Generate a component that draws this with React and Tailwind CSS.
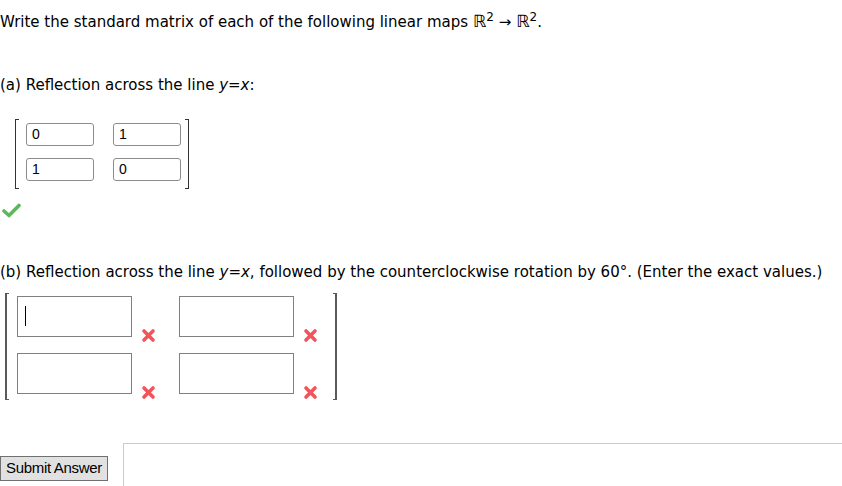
import React from "react";

function Bracket({ side, color, thick, tick }) {
  const base = side === "left" ? "border-l border-t border-b" : "border-r border-t border-b";
  return <div className={base} style={{ borderColor: color, borderLeftWidth: side === "left" ? thick : 0, borderRightWidth: side === "right" ? thick : 0, width: tick }} />;
}

function XMark() {
  return <svg width="15" height="15" viewBox="0 0 15 15" className="shrink-0">
    <path d="M3 3 L12 12 M12 3 L3 12" stroke="#f2545b" strokeWidth="3.6" strokeLinecap="round" />
  </svg>;
}

function Check() {
  return <svg width="19" height="15" viewBox="0 0 19 15">
    <path d="M2 8 L7 12.5 L17 2.5" fill="none" stroke="#5cb85c" strokeWidth="3.6" strokeLinecap="round" strokeLinejoin="round" />
  </svg>;
}

function SmallBox({ value }) {
  return <div className="flex h-[23px] w-[68px] items-center rounded-[3px] border border-[#8c8c8c] pl-[5px] font-['Liberation_Sans',Arial,sans-serif] text-[14px] text-black">{value}</div>;
}

function BigCell({ caret }) {
  return <div className="flex items-end">
    <div className="relative h-[41px] w-[115px] border border-[#808080] bg-white">
      {caret && <span className="absolute left-[7px] top-[9px] h-[20px] w-px bg-black" />}
    </div>
    <div className="ml-[9px] mb-[-6px]"><XMark /></div>
  </div>;
}

export default function App() {
  return <div className="min-h-screen bg-white font-['DejaVu_Sans',Verdana,sans-serif] text-[15px] text-black">
    <p className="pt-[11px] leading-[20px]">Write the standard matrix of each of the following linear maps <span className="text-[17px]">ℝ</span><sup className="text-[12px]">2</sup> → <span className="text-[17px]">ℝ</span><sup className="text-[12px]">2</sup>.</p>

    <p className="mt-[43px] leading-[20px]">(a) Reflection across the line <i>y</i>=<i>x</i>:</p>

    <div className="ml-[15px] mt-[24px] flex h-[70px]">
      <Bracket side="left" color="#333" thick={1} tick={4} />
      <div className="ml-[7px] mt-[4px] grid grid-cols-[68px_68px] gap-x-[19px] gap-y-[12px] self-start">
        <SmallBox value="0" />
        <SmallBox value="1" />
        <SmallBox value="1" />
        <SmallBox value="0" />
      </div>
      <div className="ml-[4px] flex"><Bracket side="right" color="#333" thick={1} tick={4} /></div>
    </div>

    <div className="ml-[2px] mt-[14px]"><Check /></div>

    <p className="mt-[44px] leading-[20px]">(b) Reflection across the line <i>y</i>=<i>x</i>, followed by the counterclockwise rotation by 60°. (Enter the exact values.)</p>

    <div className="ml-[5px] mt-[11px] flex h-[107px]">
      <Bracket side="left" color="#5a5a5a" thick={2} tick={4} />
      <div className="ml-[8px] mt-[3px] grid grid-cols-[139px_139px] gap-x-[23px] gap-y-[16px] self-start">
        <BigCell caret />
        <BigCell />
        <BigCell />
        <BigCell />
      </div>
      <div className="ml-[15px] flex"><Bracket side="right" color="#5a5a5a" thick={2} tick={4} /></div>
    </div>

    <div className="mt-[43px] flex items-start">
      <button className="mt-[13px] h-[25px] w-[108px] border border-[#707070] bg-[#e1e1e1] font-['Liberation_Sans',Arial,sans-serif] text-[15px] tracking-[-0.3px] text-black">Submit Answer</button>
      <div className="ml-[15px] h-[60px] flex-1 border-l border-t border-[#cccccc]" />
    </div>
  </div>;
}
